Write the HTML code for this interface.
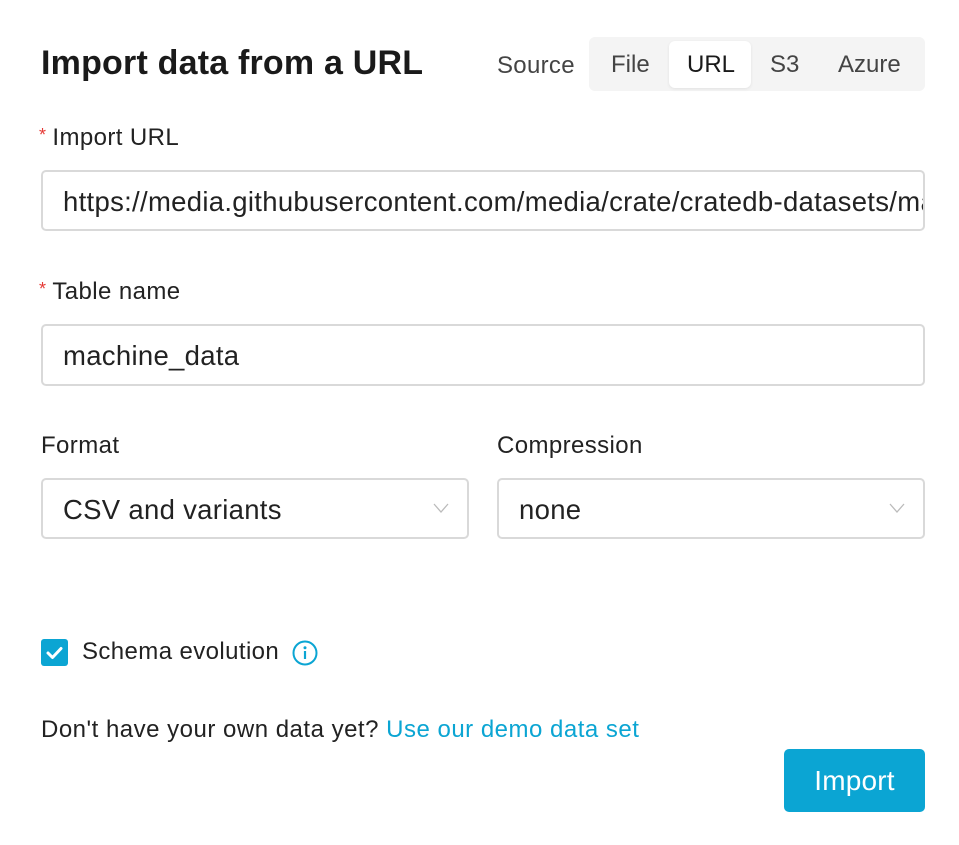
<!DOCTYPE html>
<html><head><style>
*{box-sizing:border-box;margin:0;padding:0}
body{width:959px;height:845px;background:#fff;font-family:"Liberation Sans",sans-serif;color:#222;position:relative;overflow:hidden}
.a{position:absolute;white-space:nowrap}
h1{position:absolute;left:41px;top:44px;font-size:34px;font-weight:bold;color:#1a1a1a;letter-spacing:0.2px}
.tabs{position:absolute;left:589px;top:37px;width:336px;height:54px;background:#f4f4f4;border-radius:6px}
.tab{position:absolute;top:14px;font-size:24px;color:#444}
.pill{position:absolute;left:80px;top:4px;width:82px;height:47px;background:#fff;border-radius:6px;box-shadow:0 1px 3px rgba(0,0,0,.08)}
.lbl{font-size:24px;color:#222;letter-spacing:0.4px}
.req{color:#e53935;font-size:18px;margin-right:6px;vertical-align:4px}
.inp{position:absolute;border:2px solid #d9d9d9;border-radius:5px;height:61px;font-size:27.5px;letter-spacing:0.3px;padding-left:20px;line-height:59px;color:#222;overflow:hidden;white-space:nowrap}
.chev{position:absolute;right:18px;top:22px}
</style></head><body>
<h1>Import data from a URL</h1>
<div class="a" style="left:497px;top:52px;font-size:24px;color:#444;letter-spacing:0.3px">Source</div>
<div class="tabs">
<div class="pill"></div>
<div class="tab" style="left:22px">File</div>
<div class="tab" style="left:98px;color:#1a1a1a">URL</div>
<div class="tab" style="left:181px">S3</div>
<div class="tab" style="left:249px">Azure</div>
</div>
<div class="a lbl" style="left:39px;top:124px"><span class="req">*</span>Import URL</div>
<div class="inp" style="left:41px;top:170px;width:884px">https://media.githubusercontent.com/media/crate/cratedb-datasets/main/machine-data</div>
<div class="a lbl" style="left:39px;top:278px"><span class="req">*</span>Table name</div>
<div class="inp" style="left:41px;top:324px;width:884px;height:62px">machine_data</div>
<div class="a lbl" style="left:41px;top:432px">Format</div>
<div class="a lbl" style="left:497px;top:432px">Compression</div>
<div class="inp" style="left:41px;top:478px;width:428px">CSV and variants<svg class="chev" width="16" height="12" viewBox="0 0 16 12"><path d="M1 2l7 8 7-8" fill="none" stroke="#bbb" stroke-width="1.3"/></svg></div>
<div class="inp" style="left:497px;top:478px;width:428px">none<svg class="chev" width="16" height="12" viewBox="0 0 16 12"><path d="M1 2l7 8 7-8" fill="none" stroke="#bbb" stroke-width="1.3"/></svg></div>
<svg class="a" style="left:41px;top:639px" width="27" height="27" viewBox="0 0 27 27"><rect width="27" height="27" rx="3" fill="#0ba5d3"/><path d="M7 14l4.5 4.5L20 9.5" fill="none" stroke="#fff" stroke-width="3" stroke-linecap="round" stroke-linejoin="round"/></svg>
<div class="a lbl" style="left:82px;top:638px">Schema evolution</div>
<svg class="a" style="left:292px;top:640px" width="26" height="26" viewBox="0 0 26 26"><circle cx="13" cy="13" r="11.5" fill="none" stroke="#0ba5d3" stroke-width="2"/><circle cx="13" cy="7.8" r="1.5" fill="#0ba5d3"/><path d="M13 11v8" stroke="#0ba5d3" stroke-width="2.2"/></svg>
<div class="a lbl" style="left:41px;top:716px;letter-spacing:0.5px">Don't have your own data yet? <span style="color:#0ba5d3">Use our demo data set</span></div>
<div class="a" style="left:784px;top:749px;width:141px;height:63px;background:#0ba5d3;border-radius:5px;color:#fff;font-size:28px;letter-spacing:0.2px;text-align:center;line-height:63px">Import</div>
</body></html>
